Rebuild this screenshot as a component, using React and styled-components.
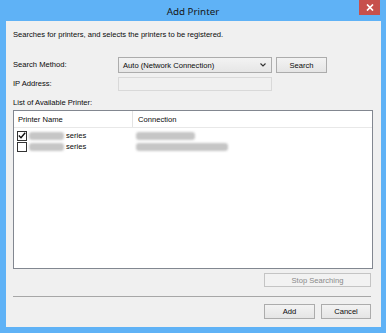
import styled, { createGlobalStyle } from "styled-components";

const GlobalStyle = createGlobalStyle`
  html, body {
    margin: 0;
    padding: 0;
    background: #5fb2f6;
  }
  * {
    box-sizing: border-box;
  }
`;

const Window = styled.div`
  width: 386px;
  height: 333px;
  display: flex;
  flex-direction: column;
  background: #5fb2f6;
  font-family: "Liberation Sans", Arial, sans-serif;
  font-size: 7.6px;
  color: #0a0a0a;
  overflow: hidden;
`;

const TitleBar = styled.div`
  height: 21px;
  flex: none;
  display: grid;
  grid-template-columns: 1fr auto 1fr;
`;

const Title = styled.div`
  grid-column: 2;
  font-family: "Noto Sans", "Liberation Sans", sans-serif;
  font-size: 9.8px;
  line-height: 21px;
  padding-top: 1px;
  color: #161616;
`;

const CloseButton = styled.div`
  grid-column: 3;
  justify-self: end;
  align-self: start;
  width: 21px;
  height: 15px;
  margin-right: 6px;
  background: #c7504c;
  display: flex;
  align-items: center;
  justify-content: center;
`;

const Client = styled.div`
  flex: 1;
  margin: 0 5px 6px 6px;
  background: #f0f0f0;
  display: flex;
  flex-direction: column;
  padding: 8px 8px 8px 7px;
`;

const Description = styled.div`
  line-height: 11px;
  height: 11px;
  white-space: nowrap;
`;

const FormRow = styled.div`
  display: grid;
  grid-template-columns: 101px 154px auto;
  align-items: center;
  column-gap: 4px;
  height: ${(p) => p.$h}px;
  margin-top: ${(p) => p.$top}px;
`;

const Label = styled.div`
  line-height: 10px;
  white-space: nowrap;
`;

const Combo = styled.div`
  height: 16px;
  border: 1px solid #acacac;
  background: linear-gradient(#f3f3f3, #e6e6e6);
  display: flex;
  align-items: center;
  justify-content: space-between;
  padding: 0 5px 0 4px;
  white-space: nowrap;
`;

const TextField = styled.div`
  height: 14px;
  border: 1px solid #d9d9d9;
  background: #f0f0f0;
`;

const Button = styled.div`
  width: ${(p) => p.$w}px;
  height: ${(p) => p.$h || 15}px;
  border: 1px solid ${(p) => (p.$disabled ? "#c4c4c4" : "#acacac")};
  background: ${(p) =>
    p.$disabled ? "#f2f2f2" : "linear-gradient(#f3f3f3, #e5e5e5)"};
  color: ${(p) => (p.$disabled ? "#8a8a8a" : "#0a0a0a")};
  display: flex;
  align-items: center;
  justify-content: center;
  white-space: nowrap;
`;

const ListLabel = styled(Label)`
  margin-top: 7px;
  height: 10px;
`;

const ListBox = styled.div`
  flex: 1;
  margin-top: 2px;
  border: 1px solid #828790;
  background: #fff;
  display: flex;
  flex-direction: column;
`;

const HeaderRow = styled.div`
  height: 17px;
  display: grid;
  grid-template-columns: 119px 1fr;
  border-bottom: 1px solid #e8e8e8;
`;

const HeaderCell = styled.div`
  display: flex;
  align-items: center;
  padding-left: ${(p) => p.$pad}px;
  border-right: ${(p) => (p.$divider ? "1px solid #e3e3e3" : "none")};
`;

const Rows = styled.div`
  padding-top: 2px;
  display: flex;
  flex-direction: column;
`;

const Row = styled.div`
  height: 11px;
  display: grid;
  grid-template-columns: 119px 1fr;
  align-items: center;
`;

const NameCell = styled.div`
  display: flex;
  align-items: center;
  padding-left: 3px;
  gap: 2px;
`;

const ConnCell = styled.div`
  display: flex;
  align-items: center;
  padding-left: 3px;
`;

const Checkbox = styled.div`
  width: 10px;
  height: 10px;
  border: 1px solid #333;
  background: #fff;
  display: flex;
  align-items: center;
  justify-content: center;
`;

const Blur = styled.div`
  width: ${(p) => p.$w}px;
  height: 8px;
  border-radius: 3px;
  background: #c6c6c6;
  filter: blur(1.2px);
`;

const ButtonRow = styled.div`
  display: flex;
  justify-content: flex-end;
  gap: 6px;
  padding-right: 2px;
  margin-top: ${(p) => p.$top}px;
`;

const Separator = styled.div`
  margin-top: 9px;
  margin-right: 2px;
  height: 1px;
  background: #a7a7a7;
`;

const printers = [
  { checked: true, name: 35, conn: 59 },
  { checked: false, name: 35, conn: 92 },
];

export default function App() {
  return (
    <>
      <GlobalStyle />
      <Window>
        <TitleBar>
          <Title>Add Printer</Title>
          <CloseButton>
            <svg width="8" height="7" viewBox="0 0 8 7">
              <path d="M1 0.5 L7 6.5 M7 0.5 L1 6.5" stroke="#fff" strokeWidth="1.7" />
            </svg>
          </CloseButton>
        </TitleBar>
        <Client>
          <Description>
            Searches for printers, and selects the printers to be registered.
          </Description>
          <FormRow $h={16} $top={17}>
            <Label>Search Method:</Label>
            <Combo>
              <span>Auto (Network Connection)</span>
              <svg width="6" height="4" viewBox="0 0 6 4">
                <path d="M0.5 0.5 L3 3 L5.5 0.5" stroke="#333" strokeWidth="1.1" fill="none" />
              </svg>
            </Combo>
            <Button $w={51} $h={16}>Search</Button>
          </FormRow>
          <FormRow $h={14} $top={4}>
            <Label>IP Address:</Label>
            <TextField />
          </FormRow>
          <ListLabel>List of Available Printer:</ListLabel>
          <ListBox>
            <HeaderRow>
              <HeaderCell $pad={4} $divider>Printer Name</HeaderCell>
              <HeaderCell $pad={5}>Connection</HeaderCell>
            </HeaderRow>
            <Rows>
              {printers.map((p, i) => (
                <Row key={i}>
                  <NameCell>
                    <Checkbox>
                      {p.checked && (
                        <svg width="8" height="7" viewBox="0 0 8 7">
                          <path d="M0.8 3.6 L3 5.8 L7.2 0.8" stroke="#111" strokeWidth="1.4" fill="none" />
                        </svg>
                      )}
                    </Checkbox>
                    <Blur $w={p.name} />
                    <span>series</span>
                  </NameCell>
                  <ConnCell>
                    <Blur $w={p.conn} />
                  </ConnCell>
                </Row>
              ))}
            </Rows>
          </ListBox>
          <ButtonRow $top={4}>
            <Button $w={107} $h={14} $disabled>
              Stop Searching
            </Button>
          </ButtonRow>
          <Separator />
          <ButtonRow $top={7}>
            <Button $w={51}>Add</Button>
            <Button $w={50}>Cancel</Button>
          </ButtonRow>
        </Client>
      </Window>
    </>
  );
}
